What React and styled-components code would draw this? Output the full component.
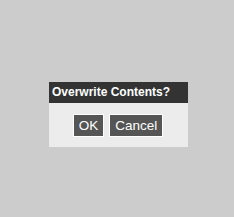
import styled, { createGlobalStyle } from "styled-components";

const GlobalStyle = createGlobalStyle`
  html, body {
    margin: 0;
    padding: 0;
    background: #cccccc;
  }
`;

const Page = styled.div`
  width: 234px;
  height: 217px;
  display: flex;
  justify-content: center;
  align-items: flex-start;
  padding: 82px 0 0 3px;
  box-sizing: border-box;
  font-family: "Liberation Sans", Arial, sans-serif;
`;

const Dialog = styled.div`
  width: 139px;
  background: #ececec;
`;

const Header = styled.div`
  height: 21px;
  background: #333333;
  color: #ffffff;
  font-size: 12px;
  font-weight: bold;
  line-height: 21px;
  padding-left: 3px;
`;

const Body = styled.div`
  height: 44px;
  display: flex;
  justify-content: center;
  align-items: flex-start;
  gap: 5px;
  padding: 11px 0 0 0;
  box-sizing: border-box;
  margin-left: -1px;
`;

const Button = styled.button`
  height: 23px;
  box-sizing: border-box;
  padding: 0 ${(props) => (props.wide ? 5 : 5)}px;
  border: 1px solid #ffffff;
  background: #555555;
  color: #ffffff;
  font-family: "Liberation Sans", Arial, sans-serif;
  font-size: 13.5px;
  line-height: 21px;
  cursor: pointer;
`;

const App = () => {
  return (
    <Page>
      <GlobalStyle />
      <Dialog>
        <Header>Overwrite Contents?</Header>
        <Body>
          <Button>OK</Button>
          <Button wide>Cancel</Button>
        </Body>
      </Dialog>
    </Page>
  );
};

export default App;
